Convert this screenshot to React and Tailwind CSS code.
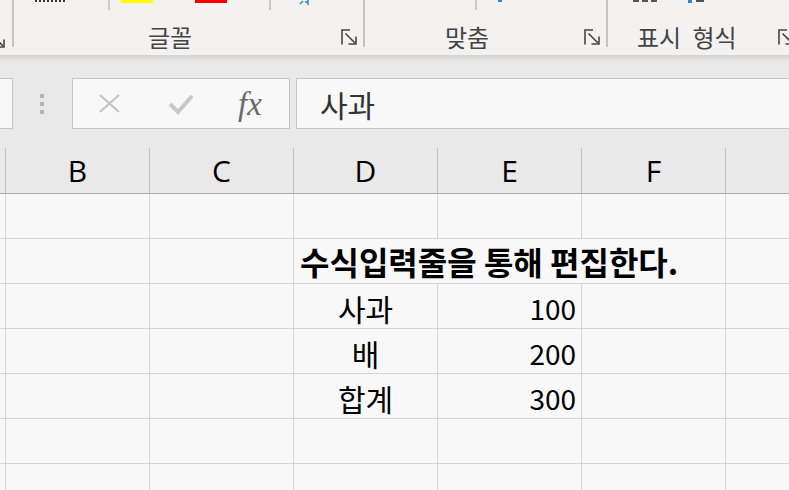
import React from "react";

const Launcher = () => (
  <svg width="16" height="16" viewBox="0 0 16 16" fill="none" stroke="#454545" strokeWidth="1.6" className="shrink-0">
    <path d="M1 15.5V1h8" />
    <path d="M4.5 4.5L14 14" />
    <path d="M15 7.5V15H7.5" />
  </svg>
);

const cols = ["B", "C", "D", "E", "F"];

function Row({ children, last }) {
  return (
    <div className={`h-[45px] shrink-0 flex ${last ? "" : "border-b border-[#d6d6d6]"}`}>
      {children}
    </div>
  );
}

function EmptyCells() {
  return (
    <>
      <div className="w-[6px] shrink-0 border-r border-[#d6d6d6]" />
      {cols.map((c) => (
        <div key={c} className="w-[144px] shrink-0 border-r border-[#d6d6d6]" />
      ))}
      <div className="flex-1" />
    </>
  );
}

export default function App() {
  const data = [
    ["사과", "100"],
    ["배", "200"],
    ["합계", "300"],
  ];
  return (
    <div className="w-[789px] h-[490px] overflow-hidden bg-[#f8f8f8] flex flex-col font-['Noto_Sans_CJK_KR',sans-serif]">
      {/* Ribbon */}
      <div className="h-[55px] shrink-0 flex bg-[#f3f2f1]">
        <div className="w-[12px] shrink-0 flex flex-col justify-end pb-[7px] overflow-hidden">
          <div className="-ml-[11px]">
            <Launcher />
          </div>
        </div>
        <div className="w-[2px] h-[47px] shrink-0 bg-[#c3c3c3]" />

        {/* 글꼴 */}
        <div className="w-[349px] shrink-0 flex flex-col">
          <div className="h-[10px] flex items-start">
            <div className="ml-[21px] w-[30px] h-[2px] border-t-2 border-dotted border-[#333]" />
            <div className="ml-[43px] w-[2px] h-[10px] bg-[#cacaca]" />
            <div className="ml-[11px] w-[32px] h-[3px] bg-[#ffff00]" />
            <div className="ml-[42px] w-[32px] h-[3px] bg-[#ff0000]" />
            <div className="ml-[42px] w-[2px] h-[10px] bg-[#cacaca]" />
            <svg className="ml-[28px]" width="12" height="5" viewBox="0 0 12 5" fill="none" stroke="#2b88d8" strokeWidth="1.5">
              <path d="M1 4L4 1M9 0V5M6 2h3" />
            </svg>
          </div>
          <div className="mt-[15px] h-[24px] flex items-center">
            <span className="ml-[134px] w-[48px] shrink-0 text-[24px] leading-[24px] text-[#444] whitespace-nowrap">글꼴</span>
            <div className="ml-[145px]">
              <Launcher />
            </div>
          </div>
        </div>
        <div className="w-[2px] h-[47px] shrink-0 bg-[#c3c3c3]" />

        {/* 맞춤 */}
        <div className="w-[241px] shrink-0 flex flex-col">
          <div className="h-[10px] flex items-start">
            <div className="ml-[110px] w-[2px] h-[10px] bg-[#cacaca]" />
            <div className="ml-[21px] w-[4px] h-[2px] bg-[#2b88d8]" />
          </div>
          <div className="mt-[15px] h-[24px] flex items-center">
            <span className="ml-[80px] w-[48px] shrink-0 text-[24px] leading-[24px] text-[#444] whitespace-nowrap">맞춤</span>
            <div className="ml-[91px]">
              <Launcher />
            </div>
          </div>
        </div>
        <div className="w-[2px] h-[47px] shrink-0 bg-[#c3c3c3]" />

        {/* 표시 형식 */}
        <div className="flex-1 flex flex-col overflow-hidden">
          <div className="h-[10px] flex items-start">
            <div className="ml-[25px] w-[6px] h-[2px] bg-[#555]" />
            <div className="ml-[3px] w-[6px] h-[2px] bg-[#555]" />
            <div className="ml-[3px] w-[6px] h-[2px] bg-[#555]" />
            <div className="ml-[31px] w-[4px] h-[3px] bg-[#2b88d8]" />
            <div className="ml-[4px] w-[8px] h-[2px] bg-[#555]" />
          </div>
          <div className="mt-[15px] h-[24px] flex items-center">
            <span className="ml-[29px] w-[101px] shrink-0 text-[24px] leading-[24px] text-[#444] whitespace-nowrap [word-spacing:6px]">표시 형식</span>
            <div className="ml-[40px]">
              <Launcher />
            </div>
          </div>
        </div>
      </div>

      {/* Formula area */}
      <div className="h-[93px] shrink-0 flex flex-col bg-[#e9e9e9]">
        <div className="h-[7px] bg-linear-to-b from-[#d3d3d3] to-[#e9e9e9]" />
        <div className="mt-[16px] h-[51px] flex">
          <div className="w-[13px] shrink-0 bg-[#f8f8f8] border-y border-r border-[#c6c6c6]" />
          <div className="ml-[27px] w-[4px] flex flex-col justify-center gap-[4px]">
            <div className="w-[4px] h-[4px] bg-[#b4b4b4]" />
            <div className="w-[4px] h-[4px] bg-[#b4b4b4]" />
            <div className="w-[4px] h-[4px] bg-[#b4b4b4]" />
          </div>
          <div className="ml-[28px] w-[218px] shrink-0 bg-[#f8f8f8] border border-[#c6c6c6] flex items-center">
            <svg className="ml-[25px]" width="23" height="21" viewBox="0 0 23 21" fill="none" stroke="#c4c4c4" strokeWidth="2.2">
              <path d="M2 2L21 19M21 2L2 19" />
            </svg>
            <svg className="ml-[47px]" width="26" height="22" viewBox="0 0 26 22" fill="none" stroke="#c8c8c8" strokeWidth="4">
              <path d="M2 11L10 19L24 3" />
            </svg>
            <span className="ml-[44px] font-['Liberation_Serif',serif] italic text-[33px] leading-[30px] text-[#6a6a6a]">fx</span>
          </div>
          <div className="ml-[6px] flex-1 bg-[#f8f8f8] border-y border-l border-[#c6c6c6] flex items-center pl-[23px]">
            <span className="text-[30px] leading-[32px] text-[#333]">사과</span>
          </div>
        </div>
      </div>

      {/* Column headers */}
      <div className="h-[46px] shrink-0 flex bg-[#e9e9e9] border-b border-[#ababab]">
        <div className="w-[6px] shrink-0 border-r border-[#c2c2c2]" />
        {cols.map((c) => (
          <div key={c} className="w-[144px] shrink-0 border-r border-[#c2c2c2] flex items-center justify-center font-['Open_Sans',sans-serif] text-[30px] leading-none text-black">
            {c}
          </div>
        ))}
        <div className="flex-1" />
      </div>

      {/* Grid */}
      <Row>
        <EmptyCells />
      </Row>
      <Row>
        <div className="w-[6px] shrink-0 border-r border-[#d6d6d6]" />
        <div className="w-[144px] shrink-0 border-r border-[#d6d6d6]" />
        <div className="w-[144px] shrink-0 border-r border-[#d6d6d6]" />
        <div className="w-[144px] shrink-0 flex items-center pl-[6px] overflow-visible z-10">
          <span className="whitespace-nowrap font-bold text-[32px] leading-[34px] text-black">수식입력줄을 통해 편집한다.</span>
        </div>
        <div className="w-[144px] shrink-0" />
        <div className="w-[144px] shrink-0 border-r border-[#d6d6d6]" />
        <div className="flex-1" />
      </Row>
      {data.map(([name, val]) => (
        <Row key={name}>
          <div className="w-[6px] shrink-0 border-r border-[#d6d6d6]" />
          <div className="w-[144px] shrink-0 border-r border-[#d6d6d6]" />
          <div className="w-[144px] shrink-0 border-r border-[#d6d6d6]" />
          <div className="w-[144px] shrink-0 border-r border-[#d6d6d6] flex items-center justify-center pt-[3px]">
            <span className="text-[30px] leading-[34px] text-black">{name}</span>
          </div>
          <div className="w-[144px] shrink-0 border-r border-[#d6d6d6] flex items-center justify-end pr-[5px] pt-[3px]">
            <span className="text-[28px] leading-[32px] text-black">{val}</span>
          </div>
          <div className="w-[144px] shrink-0 border-r border-[#d6d6d6]" />
          <div className="flex-1" />
        </Row>
      ))}
      <Row>
        <EmptyCells />
      </Row>
      <Row last>
        <EmptyCells />
      </Row>
    </div>
  );
}
